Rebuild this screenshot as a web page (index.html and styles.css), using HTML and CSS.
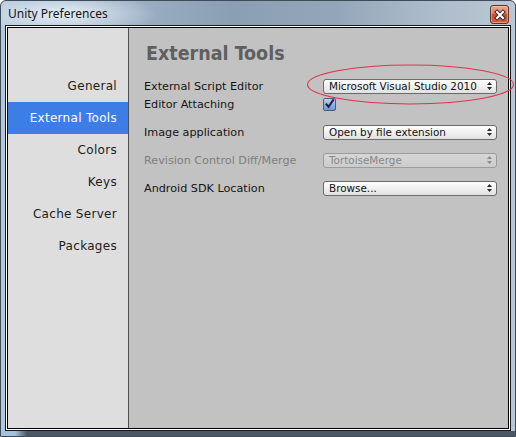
FILE: index.html
```html
<!DOCTYPE html>
<html>
<head>
<meta charset="utf-8">
<title>Unity Preferences</title>
<link rel="stylesheet" href="styles.css">
</head>
<body>
<div class="window">
  <div class="titlebar">
    <span class="title">Unity Preferences</span>
    <div class="close">
      <svg width="16" height="16" viewBox="0 0 16 16">
        <path d="M5 5 L11 11 M11 5 L5 11" stroke="#3a2a2a" stroke-width="4" stroke-linecap="square" fill="none"/>
        <path d="M5 5 L11 11 M11 5 L5 11" stroke="#ffffff" stroke-width="2" stroke-linecap="square" fill="none"/>
      </svg>
    </div>
  </div>
  <div class="client">
    <div class="client-a">
      <div class="client-b">
        <div class="sidebar">
          <div class="nav-item">General</div>
          <div class="nav-item active">External Tools</div>
          <div class="nav-item">Colors</div>
          <div class="nav-item">Keys</div>
          <div class="nav-item">Cache Server</div>
          <div class="nav-item">Packages</div>
        </div>
        <div class="panel">
          <div class="heading">External Tools</div>
          <div class="form">
            <div class="row">
              <div class="label">External Script Editor</div>
              <div class="select"><span>Microsoft Visual Studio 2010</span>
                <svg class="arrows" width="5" height="8" viewBox="0 0 5 8"><path d="M2.5 0 L5 3 L0 3 Z M0 5 L5 5 L2.5 8 Z" fill="#2a2a2a"/></svg>
              </div>
            </div>
            <div class="row">
              <div class="label">Editor Attaching</div>
              <div class="check">
                <svg width="12" height="12" viewBox="0 0 12 12"><path d="M2 5.5 L5 9 L10.5 1" stroke="#14264a" stroke-width="2.2" fill="none"/></svg>
              </div>
            </div>
            <div class="row spaced">
              <div class="label">Image application</div>
              <div class="select"><span>Open by file extension</span>
                <svg class="arrows" width="5" height="8" viewBox="0 0 5 8"><path d="M2.5 0 L5 3 L0 3 Z M0 5 L5 5 L2.5 8 Z" fill="#2a2a2a"/></svg>
              </div>
            </div>
            <div class="row spaced">
              <div class="label disabled">Revision Control Diff/Merge</div>
              <div class="select is-disabled"><span>TortoiseMerge</span>
                <svg class="arrows" width="5" height="8" viewBox="0 0 5 8"><path d="M2.5 0 L5 3 L0 3 Z M0 5 L5 5 L2.5 8 Z" fill="#8a8a8a"/></svg>
              </div>
            </div>
            <div class="row spaced">
              <div class="label">Android SDK Location</div>
              <div class="select"><span>Browse...</span>
                <svg class="arrows" width="5" height="8" viewBox="0 0 5 8"><path d="M2.5 0 L5 3 L0 3 Z M0 5 L5 5 L2.5 8 Z" fill="#2a2a2a"/></svg>
              </div>
            </div>
          </div>
        </div>
      </div>
    </div>
  </div>
  <svg class="annot" width="210" height="42" viewBox="0 0 210 42">
    <ellipse cx="104.5" cy="20.5" rx="103" ry="19.5" fill="none" stroke="#e2304e" stroke-width="1.1"/>
  </svg>
</div>
</body>
</html>
```

FILE: styles.css
```css
html, body {
  margin: 0;
  padding: 0;
}
body {
  width: 516px;
  height: 437px;
  overflow: hidden;
  background: #ffffff;
}
.window {
  position: relative;
  box-sizing: border-box;
  width: 516px;
  height: 437px;
  border: 1px solid #3e4b58;
  border-radius: 6px 6px 0 0;
  padding: 0 4px 5px 4px;
  display: flex;
  flex-direction: column;
  background:
    linear-gradient(90deg, #a3c2df 0, #a3c2df 14px, #4b5764 26px, #4b5764 100%) left bottom / 100% 5px no-repeat,
    radial-gradient(ellipse 95px 22px at 62px 13px, rgba(238,244,250,0.9), rgba(238,244,250,0)),
    linear-gradient(90deg, #b2c7dc 0%, #a2b6ca 18%, #8b9fb4 45%, #93a6b9 65%, #aebdcc 85%, #bac6d2 100%);
}
.titlebar {
  height: 24px;
  display: flex;
  justify-content: space-between;
  align-items: flex-start;
}
.title {
  margin: 5px 0 0 3px;
  font-family: "Noto Sans", "Open Sans", sans-serif;
  font-size: 12px;
  line-height: 16px;
  color: #151515;
}
.close {
  margin: 4px 2px 0 0;
  box-sizing: border-box;
  width: 19px;
  height: 19px;
  border: 1px solid #5e3327;
  border-radius: 3px;
  background: linear-gradient(#eaa994 0%, #dc7e63 42%, #c9492b 52%, #d2623f 100%);
  box-shadow: inset 0 0 0 1px rgba(255, 220, 200, 0.45);
  display: flex;
  align-items: center;
  justify-content: center;
}
.client {
  border: 1px solid #1b1b1b;
}
.client-a {
  border: 1px solid #ffffff;
}
.client-b {
  border: 1px solid #000000;
  height: 400px;
  display: flex;
}
.sidebar {
  width: 120px;
  border-right: 1px solid #4f4f4f;
  background: #dedede;
  padding-top: 42px;
}
.nav-item {
  height: 32px;
  line-height: 32px;
  text-align: right;
  padding-right: 11px;
  font-family: "DejaVu Sans", sans-serif;
  font-size: 12px;
  letter-spacing: 0.3px;
  color: #1c1c1c;
}
.nav-item.active {
  background: #3d7ee6;
  color: #ffffff;
}
.panel {
  flex: 1;
  background: #c2c2c2;
  padding: 15px 0 0 15px;
}
.heading {
  margin-left: 2px;
  font-family: "DejaVu Sans Condensed", "DejaVu Sans", sans-serif;
  font-stretch: condensed;
  font-weight: bold;
  font-size: 19.5px;
  line-height: 22px;
  color: #5f5f5f;
}
.form {
  margin-top: 12px;
  display: flex;
  flex-direction: column;
}
.row {
  height: 18px;
  display: flex;
  align-items: center;
}
.row.spaced {
  margin-top: 10px;
}
.label {
  width: 179px;
  font-family: "DejaVu Sans", sans-serif;
  font-size: 11.2px;
  color: #151515;
  white-space: nowrap;
}
.label.disabled {
  color: #7f7f7f;
}
.select {
  box-sizing: border-box;
  width: 174px;
  height: 15px;
  border: 1px solid #6b6b6b;
  border-radius: 3px;
  background: linear-gradient(#fefefe, #e1e1e1);
  display: flex;
  align-items: center;
  justify-content: space-between;
  padding: 0 4px 0 5px;
  font-family: "DejaVu Sans", sans-serif;
  font-size: 10.4px;
  color: #111111;
  white-space: nowrap;
}
.select.is-disabled {
  border-color: #9c9c9c;
  background: linear-gradient(#d6d6d6, #cccccc);
  color: #888888;
}
.arrows {
  display: block;
}
.check {
  box-sizing: border-box;
  width: 13px;
  height: 13px;
  border: 1px solid #4a5e80;
  border-radius: 2px;
  background: linear-gradient(#b8cff0, #7097d2);
  display: flex;
  align-items: center;
  justify-content: center;
}
.check svg {
  display: block;
}
.annot {
  position: absolute;
  left: 305px;
  top: 63px;
}
```
